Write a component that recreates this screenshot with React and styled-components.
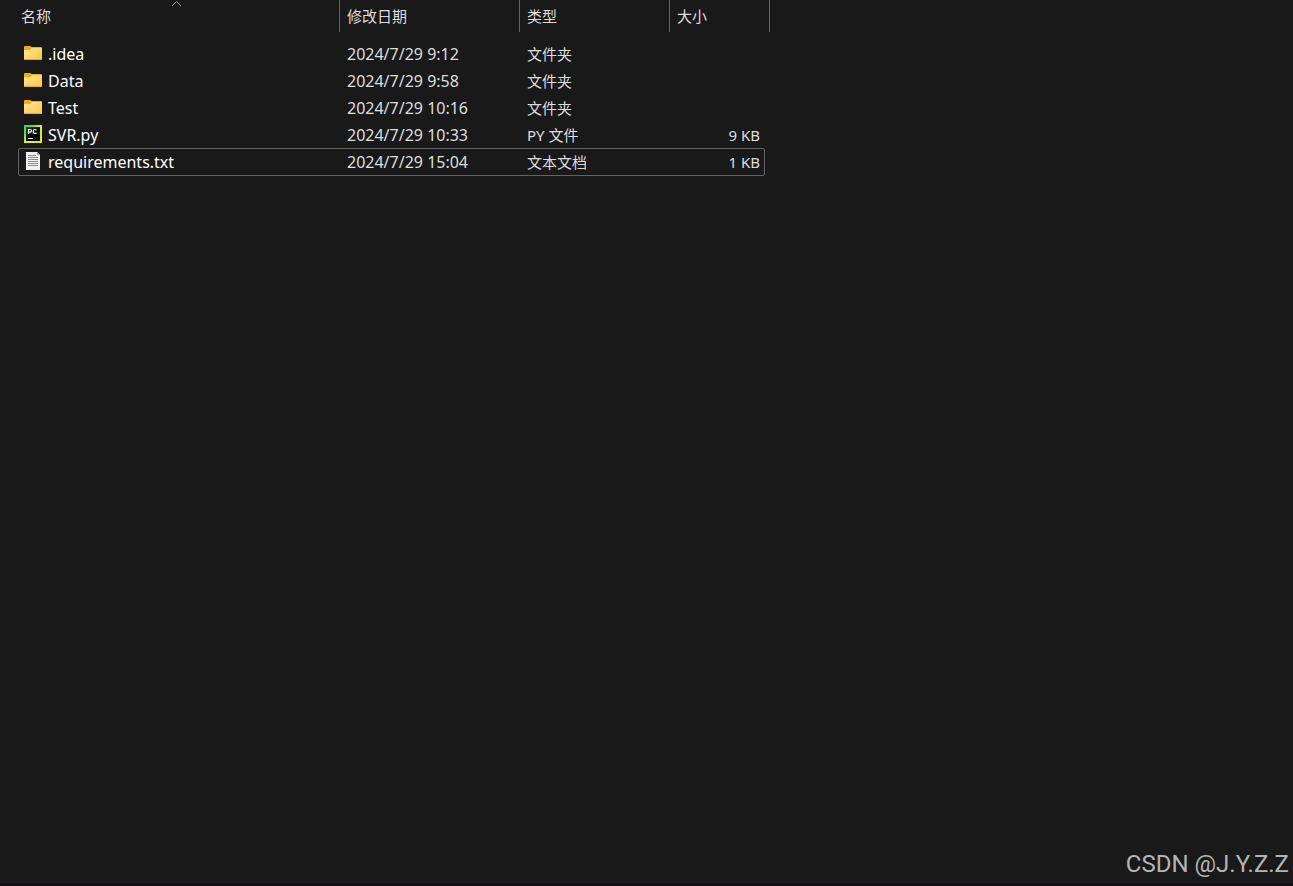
import React from "react";
import styled, { createGlobalStyle } from "styled-components";

const GlobalStyle = createGlobalStyle`
  body {
    margin: 0;
    background: #191919;
  }
`;

const Wrapper = styled.div`
  display: flex;
  flex-direction: column;
  justify-content: space-between;
  min-height: 100vh;
  box-sizing: border-box;
  border-bottom: 3px solid #160f16;
  font-family: "Noto Sans", "Noto Sans CJK SC", sans-serif;
  font-size: 15px;
  line-height: 26px;
  color: #dedede;
`;

const FileTable = styled.table`
  display: block;
  max-width: 752px;
  margin-left: 18px;
`;

const Head = styled.thead`
  display: block;
`;

const Body = styled.tbody`
  display: block;
  padding: 8px 5px 0 0;
`;

const HeadRow = styled.tr`
  display: grid;
  grid-template-columns: 322px 180px 150px 100px;
`;

const HeadCell = styled.th`
  position: relative;
  height: 32px;
  box-sizing: border-box;
  padding: 0 0 0 ${({ $first }) => ($first ? "3px" : "7px")};
  border-right: 1px solid #636363;
  font-weight: 400;
  line-height: 32px;
  text-align: left;
`;

const SortArrow = styled.svg`
  position: absolute;
  top: 0;
  left: 50%;
  margin-left: -8px;
`;

const Row = styled.tr`
  display: grid;
  grid-template-columns: 321px 180px 150px 1fr;
  box-sizing: border-box;
  height: ${({ $focused }) => ($focused ? "28px" : "27px")};
  border: 1px solid ${({ $focused }) => ($focused ? "#636363" : "transparent")};
  border-radius: 2px;
`;

const Cell = styled.td`
  padding: 0 0 0 7px;
  white-space: nowrap;
`;

const NameCell = styled(Cell)`
  display: flex;
  gap: 6px;
  padding-left: 5px;
  font-size: 16px;
  color: #fff;
`;

const DateCell = styled(Cell)`
  font-size: 16px;
`;

const SizeCell = styled(Cell)`
  padding: 0 4px 0 0;
  text-align: right;
`;

const Icon = styled.svg`
  flex: none;
  width: 18px;
  height: 18px;
  margin-top: 3px;
`;

const Watermark = styled.footer`
  padding: 0 4px 4px;
  font-family: Roboto, sans-serif;
  font-size: 24px;
  line-height: 30px;
  text-align: right;
  color: #b4b4b4;
`;

const FolderIcon = () => (
  <Icon viewBox="0 0 18 18" aria-hidden="true">
    <defs>
      <linearGradient id="folder" x1="0" y1="0" x2="1" y2="1">
        <stop offset="0" stopColor="#ffe69a" />
        <stop offset="1" stopColor="#ffc83f" />
      </linearGradient>
    </defs>
    <path d="M0 3q0-1 1-1h5l2 1h9q1 0 1 1v10H0z" fill="#f6ab10" />
    <path d="M0 6h6l2-2h10v11q0 1-1 1H1q-1 0-1-1z" fill="url(#folder)" />
    <path d="M0 15h18q0 1-1 1H1q-1 0-1-1z" fill="#e9a92b" />
  </Icon>
);

const PycharmIcon = () => (
  <Icon viewBox="0 0 18 18" aria-hidden="true">
    <defs>
      <linearGradient id="pycharm" x1="0" y1="0" x2="1" y2="1">
        <stop offset="0" stopColor="#21d789" />
        <stop offset=".25" stopColor="#4fe052" />
        <stop offset=".5" stopColor="#e4f02c" />
        <stop offset="1" stopColor="#d8e822" />
      </linearGradient>
      <linearGradient id="pycharmFace" x1="0" y1="0" x2="1" y2="1">
        <stop offset="0" stopColor="#26382c" />
        <stop offset=".6" stopColor="#000" />
      </linearGradient>
    </defs>
    <path d="M0 0h18v18H0z" fill="url(#pycharm)" />
    <path d="M2 2h14v14H2z" fill="url(#pycharmFace)" />
    <path
      d="M4.5 9V4.5h1.5q1.5 0 1.5 1.3T6 7.2H4.5M12.5 5.2q-.6-.7-1.5-.7-1.8 0-1.8 2t1.8 2q.9 0 1.5-.7"
      fill="none"
      stroke="#fff"
      strokeWidth="1.2"
    />
    <path d="M4 13h5v1H4z" fill="#fff" />
  </Icon>
);

const TextIcon = () => (
  <Icon viewBox="0 0 18 18" aria-hidden="true">
    <path d="M2 0h11l3 3v15H2z" fill="#f0f0f0" />
    <path d="M13 0v3h3z" fill="#a5a5a5" />
    <path
      d="M4 3.5h8M4 5.5h10M4 7.5h10M4 9.5h10M4 11.5h10M4 13.5h10"
      stroke="#8c8c8c"
    />
  </Icon>
);

const files = [
  { icon: FolderIcon, name: ".idea", date: "2024/7/29 9:12", type: "文件夹" },
  { icon: FolderIcon, name: "Data", date: "2024/7/29 9:58", type: "文件夹" },
  { icon: FolderIcon, name: "Test", date: "2024/7/29 10:16", type: "文件夹" },
  {
    icon: PycharmIcon,
    name: "SVR.py",
    date: "2024/7/29 10:33",
    type: "PY 文件",
    size: "9 KB",
  },
  {
    icon: TextIcon,
    name: "requirements.txt",
    date: "2024/7/29 15:04",
    type: "文本文档",
    size: "1 KB",
    focused: true,
  },
];

export default () => {
  return (
    <Wrapper lang="zh-CN">
      <GlobalStyle />
      <FileTable>
        <Head>
          <HeadRow>
            <HeadCell $first>
              名称
              <SortArrow width="11" height="7" viewBox="0 0 11 7">
                <path d="M1 6l4.5-4.5L10 6" fill="none" stroke="#a0a0a0" />
              </SortArrow>
            </HeadCell>
            <HeadCell>修改日期</HeadCell>
            <HeadCell>类型</HeadCell>
            <HeadCell>大小</HeadCell>
          </HeadRow>
        </Head>
        <Body>
          {files.map(({ icon: FileIcon, name, date, type, size, focused }) => (
            <Row key={name} $focused={focused}>
              <NameCell>
                <FileIcon />
                {name}
              </NameCell>
              <DateCell>{date}</DateCell>
              <Cell>{type}</Cell>
              <SizeCell>{size}</SizeCell>
            </Row>
          ))}
        </Body>
      </FileTable>
      <Watermark>CSDN @J.Y.Z.Z</Watermark>
    </Wrapper>
  );
};
